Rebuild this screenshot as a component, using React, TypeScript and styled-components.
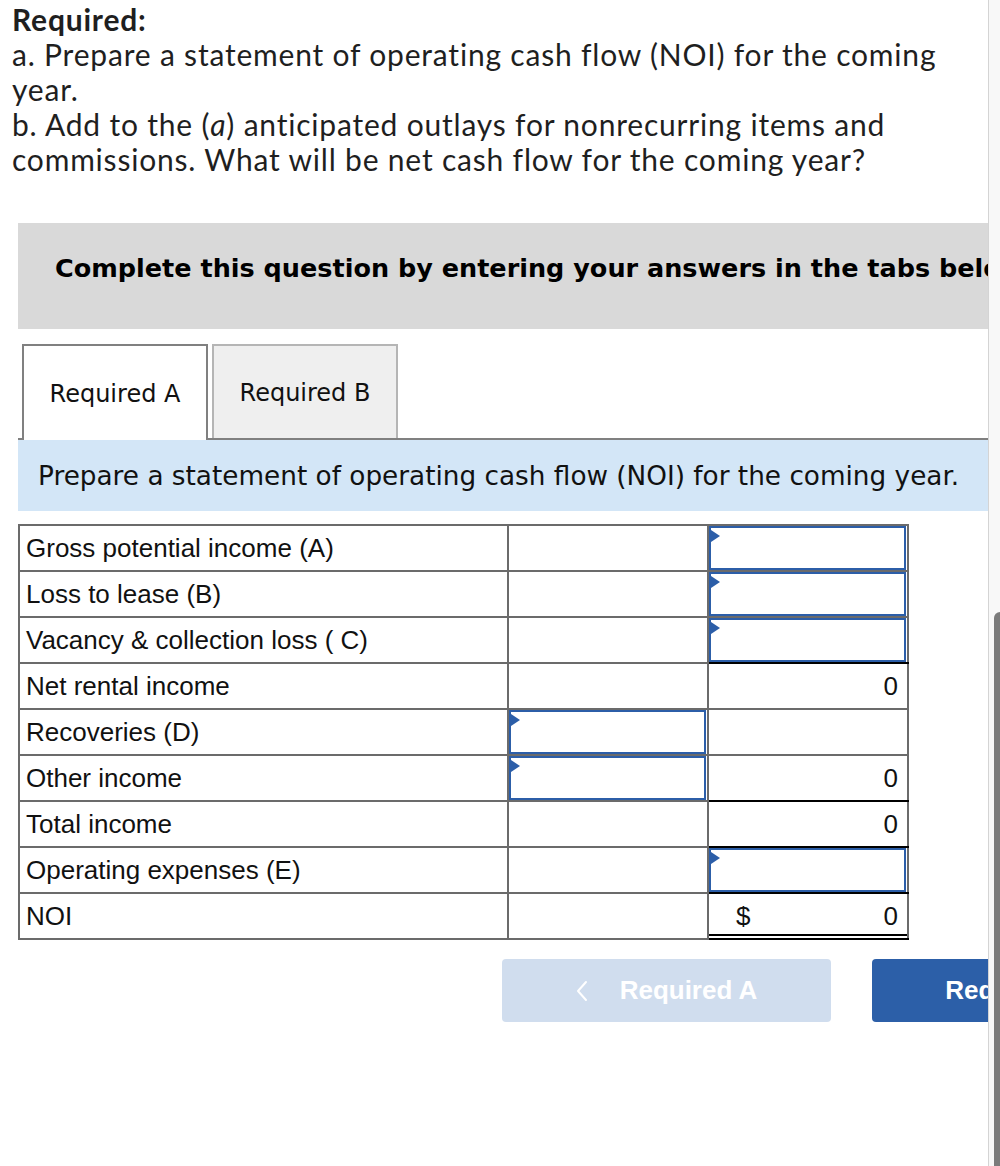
import styled, { createGlobalStyle } from "styled-components";

const GlobalStyle = createGlobalStyle`
  html, body {
    margin: 0;
    padding: 0;
    background: #ffffff;
    overflow: hidden;
  }
  body {
    font-family: "Lato", "Liberation Sans", sans-serif;
    color: #1a1a1a;
  }
`;

type Row = {
  label: string;
  mid?: "input";
  right?: "input" | string;
  rule?: "single" | "double";
  dollar?: boolean;
};

const rows: Row[] = [
  { label: "Gross potential income (A)", right: "input" },
  { label: "Loss to lease (B)", right: "input" },
  { label: "Vacancy & collection loss ( C)", right: "input", rule: "single" },
  { label: "Net rental income", right: "0" },
  { label: "Recoveries (D)", mid: "input" },
  { label: "Other income", mid: "input", right: "0", rule: "single" },
  { label: "Total income", right: "0", rule: "single" },
  { label: "Operating expenses (E)", right: "input", rule: "single" },
  { label: "NOI", right: "0", rule: "double", dollar: true },
];

const ChevronLeft = () => (
  <svg width="12" height="22" viewBox="0 0 12 22" fill="none">
    <path d="M10 2 L2 11 L10 20" stroke="#ffffff" strokeWidth="2" strokeLinecap="round" strokeLinejoin="round" />
  </svg>
);

const ChevronRight = () => (
  <svg width="12" height="22" viewBox="0 0 12 22" fill="none">
    <path d="M2 2 L10 11 L2 20" stroke="#ffffff" strokeWidth="2" strokeLinecap="round" strokeLinejoin="round" />
  </svg>
);

const App = () => {
  return (
    <Screen>
      <GlobalStyle />
      <Content>
        <Intro>
          <IntroTitle>Required:</IntroTitle>
          <IntroLine>a. Prepare a statement of operating cash flow (NOI) for the coming year.</IntroLine>
          <IntroLine>
            b. Add to the (<em>a</em>) anticipated outlays for nonrecurring items and commissions. What will be net cash flow for the coming year?
          </IntroLine>
        </Intro>

        <Panel>
          <Banner>Complete this question by entering your answers in the tabs below.</Banner>

          <TabBar>
            <Tab active>Required A</Tab>
            <Tab>Required B</Tab>
          </TabBar>

          <Instruction>Prepare a statement of operating cash flow (NOI) for the coming year.</Instruction>

          <Sheet>
            <colgroup>
              <col style={{ width: 489 }} />
              <col style={{ width: 200 }} />
              <col style={{ width: 200 }} />
            </colgroup>
            <tbody>
              {rows.map(row => (
                <tr key={row.label}>
                  <LabelCell>{row.label}</LabelCell>
                  <ValueCell>{row.mid === "input" && <InputBox />}</ValueCell>
                  <ValueCell rule={row.rule}>
                    {row.right === "input" ? (
                      <InputBox />
                    ) : (
                      <Amount>
                        <span>{row.dollar ? "$" : ""}</span>
                        <span>{row.right}</span>
                      </Amount>
                    )}
                  </ValueCell>
                </tr>
              ))}
            </tbody>
          </Sheet>

          <NavRow>
            <NavButton>
              <ChevronLeft />
              <span>Required A</span>
            </NavButton>
            <NavButton primary>
              <span>Required B</span>
              <ChevronRight />
            </NavButton>
          </NavRow>
        </Panel>
      </Content>

      <Gutter>
        <Thumb />
      </Gutter>
    </Screen>
  );
};

export default App;

const Screen = styled.div`
  display: flex;
  width: 1000px;
  height: 1166px;
  overflow: hidden;
`;

const Content = styled.div`
  width: 988px;
  flex: none;
  overflow: hidden;
`;

const Gutter = styled.div`
  flex: 1;
  display: flex;
  flex-direction: column;
  align-items: flex-end;
  background: #f8f8f8;
  border-left: 1px solid #d4d4d4;
`;

const Thumb = styled.div`
  margin-top: 612px;
  flex: 1;
  width: 6px;
  background: #7b7b7b;
  border-radius: 6px 0 0 0;
`;

const Intro = styled.div`
  padding: 2px 0 0 12px;
  width: 950px;
  font-size: 30px;
  letter-spacing: 0.8px;
  line-height: 35px;
  color: #1f1f1f;

  em {
    font-style: italic;
  }
`;

const IntroTitle = styled.div`
  font-weight: 700;
`;

const IntroLine = styled.div``;

const Panel = styled.div`
  margin: 46px 0 0 18px;
  width: 1100px;
`;

const Banner = styled.div`
  background: #d9d9d9;
  height: 106px;
  box-sizing: border-box;
  display: flex;
  align-items: center;
  padding: 0 0 16px 37px;
  font-family: "DejaVu Sans", Verdana, sans-serif;
  font-weight: 700;
  font-size: 25.5px;
  color: #000;
  white-space: nowrap;
`;

const TabBar = styled.div`
  margin-top: 15px;
  display: flex;
  gap: 4px;
  padding-left: 4px;
  border-bottom: 2px solid #808080;
`;

const Tab = styled.div<{ active?: boolean }>`
  width: 186px;
  box-sizing: border-box;
  display: flex;
  align-items: center;
  justify-content: center;
  font-family: "DejaVu Sans", Verdana, sans-serif;
  font-size: 24px;
  color: #111;
  background: ${p => (p.active ? "#ffffff" : "#efefef")};
  border: 2px solid ${p => (p.active ? "#808080" : "#b5b5b5")};
  border-bottom: none;
  margin-bottom: ${p => (p.active ? "-2px" : "0")};
  height: ${p => (p.active ? "96px" : "94px")};
  padding-top: 2px;
`;

const Instruction = styled.div`
  background: #d3e6f7;
  height: 71px;
  display: flex;
  align-items: center;
  padding-left: 20px;
  font-family: "DejaVu Sans", Verdana, sans-serif;
  font-size: 26.3px;
  color: #111;
`;

const Sheet = styled.table`
  margin-top: 13px;
  border-collapse: collapse;
  width: 889px;
  table-layout: fixed;
  font-family: "Liberation Sans", Arial, sans-serif;
  font-size: 26px;
  color: #111;

  td {
    border: 2px solid #6b6b6b;
    height: 44px;
    padding: 0;
  }
`;

const LabelCell = styled.td`
  padding-left: 6px !important;
  white-space: nowrap;
`;

const ValueCell = styled.td<{ rule?: "single" | "double" }>`
  border-bottom-color: ${p => (p.rule ? "#000 !important" : "#6b6b6b")};
  box-shadow: ${p => (p.rule === "double" ? "inset 0 -2px 0 #fff, inset 0 -4px 0 #000" : "none")};
`;

const InputBox = styled.div`
  position: relative;
  height: 40px;
  margin: 0 1px 0 0;
  border: 2px solid #2c5ea8;
  background: #fff;

  &::before {
    content: "";
    position: absolute;
    left: 0;
    top: 2px;
    border-left: 9px solid #2c5ea8;
    border-top: 6px solid transparent;
    border-bottom: 6px solid transparent;
  }
`;

const Amount = styled.div`
  display: flex;
  justify-content: space-between;
  padding: 0 9px 0 27px;
`;

const NavRow = styled.div`
  margin-top: 19px;
  display: flex;
  gap: 41px;
  padding-left: 484px;
`;

const NavButton = styled.div<{ primary?: boolean }>`
  width: 329px;
  height: 63px;
  flex: none;
  box-sizing: border-box;
  border-radius: 4px;
  display: flex;
  align-items: center;
  justify-content: center;
  gap: 32px;
  font-family: "Liberation Sans", Arial, sans-serif;
  font-weight: 700;
  font-size: 26px;
  color: #ffffff;
  background: ${p => (p.primary ? "#2c5fa8" : "#d0ddee")};
`;
